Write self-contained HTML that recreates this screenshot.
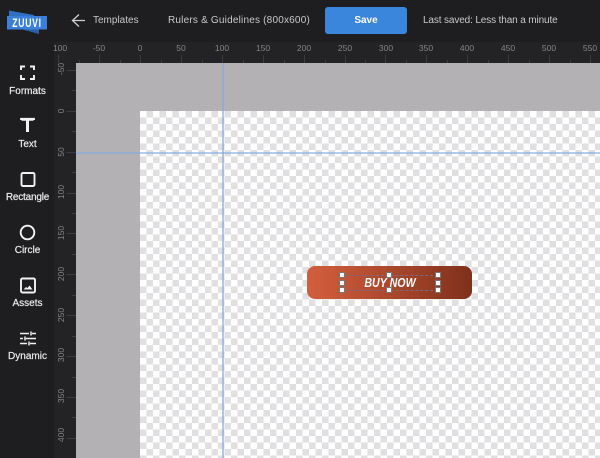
<!DOCTYPE html>
<html><head><meta charset="utf-8"><style>
html,body{margin:0;padding:0;width:600px;height:458px;overflow:hidden;background:#1e1d20;font-family:"Liberation Sans",sans-serif}
.a{position:absolute}
.t{position:absolute;white-space:nowrap;color:#c9c9ca;font-size:10px;line-height:12px}
.nav{position:absolute;left:0;width:55px;text-align:center;color:#ececec;font-size:10px;line-height:12px;-webkit-text-stroke:.2px #ececec}
.h{position:absolute;width:6px;height:6px;background:#fff;border:1px solid #777;box-sizing:border-box}
</style></head><body>
<div class="a" style="left:0;top:0;width:600px;height:458px;overflow:hidden">
<div class="a" style="left:54px;top:42px;width:546px;height:416px;background:#232225"></div>

<!-- canvas -->
<div class="a" style="left:76px;top:63px;width:524px;height:395px;background:#b3b1b3"></div>
<div class="a" style="left:140px;top:111px;width:460px;height:347px;background-color:#fff;background-image:conic-gradient(#e0dfe1 25%,#fff 0 50%,#e0dfe1 0 75%,#fff 0);background-size:13px 13px"></div>
<div class="a" style="left:222px;top:63px;width:2px;height:395px;background:rgba(130,170,225,.65)"></div>
<div class="a" style="left:76px;top:152px;width:524px;height:2px;background:rgba(130,170,225,.6)"></div>

<!-- rulers -->
<svg class="a" style="left:0;top:0" width="600" height="458" font-family="Liberation Sans,sans-serif" font-size="8.5" fill="#858587" text-anchor="middle">
<g stroke="#3c3c3f" stroke-width="1">
<path d="M58.500 55V63M99.500 55V63M140.500 55V63M181.500 55V63M222.500 55V63M263.500 55V63M304.500 55V63M345.500 55V63M385.500 55V63M426.500 55V63M467.500 55V63M508.500 55V63M549.500 55V63M590.500 55V63"/>
<path d="M79.500 60V63M120.500 60V63M161.500 60V63M202.500 60V63M243.500 60V63M284.500 60V63M325.500 60V63M365.500 60V63M406.500 60V63M447.500 60V63M488.500 60V63M529.500 60V63M570.500 60V63"/>
<path d="M66 70.500H76M66 111.500H76M66 152.500H76M66 193.500H76M66 233.500H76M66 274.500H76M66 315.500H76M66 356.500H76M66 397.500H76M66 438.500H76"/>
<path d="M72 90.500H76M72 131.500H76M72 172.500H76M72 213.500H76M72 254.500H76M72 295.500H76M72 336.500H76M72 377.500H76M72 417.500H76"/>
</g>
<text x="60" y="51">100</text><text x="99" y="51">-50</text><text x="140" y="51">0</text><text x="181" y="51">50</text><text x="222" y="51">100</text><text x="263" y="51">150</text><text x="304" y="51">200</text><text x="345" y="51">250</text><text x="386" y="51">300</text><text x="426" y="51">350</text><text x="467" y="51">400</text><text x="508" y="51">450</text><text x="549" y="51">500</text><text x="590" y="51">550</text>
<g text-anchor="middle">
<text transform="translate(64,69) rotate(-90)">-50</text>
<text transform="translate(64,111) rotate(-90)">0</text>
<text transform="translate(64,152) rotate(-90)">50</text>
<text transform="translate(64,192) rotate(-90)">100</text>
<text transform="translate(64,233) rotate(-90)">150</text>
<text transform="translate(64,274) rotate(-90)">200</text>
<text transform="translate(64,315) rotate(-90)">250</text>
<text transform="translate(64,355) rotate(-90)">300</text>
<text transform="translate(64,396) rotate(-90)">350</text>
<text transform="translate(64,435) rotate(-90)">400</text>
</g>
</svg>

<!-- top bar -->
<svg class="a" style="left:0;top:0" width="54" height="40">
<path d="M9 10.500L34 15V20H9Z" fill="#2f6fc4"/>
<path d="M17 28H39V34Z" fill="#2a5fa8"/>
<path d="M7 16H47V29.500H7Z" fill="#3a80d6"/>
<text transform="translate(27,27) scale(.72,1)" text-anchor="middle" font-family="Liberation Sans,sans-serif" font-weight="700" font-size="12" letter-spacing="1" fill="#fff">ZUUVI</text>
</svg>
<svg class="a" style="left:70px;top:12px" width="18" height="16" fill="none" stroke="#cfcfd0" stroke-width="1.3"><path d="M15 8.500H3M9 2.500L2.500 8.500L9 14.500"/></svg>
<div class="t" style="left:93px;top:15px">Templates</div>
<div class="t" style="left:168px;top:15px;letter-spacing:.2px">Rulers &amp; Guidelines (800x600)</div>
<div class="a" style="left:325px;top:7px;width:82px;height:27px;background:#3b86dd;border-radius:3px;color:#fff;font-size:10px;font-weight:700;text-align:center;line-height:28px">Save</div>
<div class="t" style="left:423px;top:15px;letter-spacing:-.13px">Last saved: Less than a minute</div>

<!-- sidebar -->
<svg class="a" style="left:0;top:60px" width="54" height="300" fill="none" stroke="#f2f2f2" stroke-width="1.9">
<path d="M21 10V6.500H25M30 6.500H34V10M34 15V19H30M25 19H21V15"/>
<path d="M21.500 60V59.300H33.500V60" stroke-width="2.800"/><path d="M27.500 59.500V72" stroke-width="3"/>
<rect x="21.500" y="113" width="13" height="13" rx="1.500"/>
<circle cx="27.500" cy="172.500" r="6.800"/>
<rect x="21" y="218.500" width="14" height="14" rx="1.500"/>
<path d="M23.500 229.500L26 227L27.500 228L29.500 225.500L32.500 229.500Z" fill="#f2f2f2" stroke="none"/>
<path d="M20 273.500H29M32 273.500H36M31 271.500V275.500M20 278.500H23M26 278.500H36M25 276.500V280.500M20 283.500H27M30 283.500H36M29 281.500V285.500" stroke-width="1.500"/>
</svg>
<div class="nav" style="top:86px">Formats</div>
<div class="nav" style="top:139px">Text</div>
<div class="nav" style="top:192px;letter-spacing:-.2px">Rectangle</div>
<div class="nav" style="top:245px">Circle</div>
<div class="nav" style="top:298px">Assets</div>
<div class="nav" style="top:351px">Dynamic</div>

<!-- banner -->
<div class="a" style="left:307px;top:266px;width:165px;height:33px;border-radius:8px;background:linear-gradient(90deg,#d25f3e,#b84f32 35%,#7f301b)"></div>
<div class="a" style="left:341px;top:275px;width:97px;height:16px;border:1px dashed #7a6a80;box-sizing:border-box"></div>
<div class="a" style="left:341px;top:275px;width:98px;text-align:center;color:#fff;font-size:13px;font-weight:700;font-style:italic;line-height:15px;transform:scaleX(.82)">BUY NOW</div>
<div class="h" style="left:339px;top:272px"></div><div class="h" style="left:386px;top:272px"></div><div class="h" style="left:435px;top:272px"></div>
<div class="h" style="left:339px;top:280px"></div><div class="h" style="left:435px;top:280px"></div>
<div class="h" style="left:339px;top:287px"></div><div class="h" style="left:386px;top:287px"></div><div class="h" style="left:435px;top:287px"></div>
</div>
</body></html>
